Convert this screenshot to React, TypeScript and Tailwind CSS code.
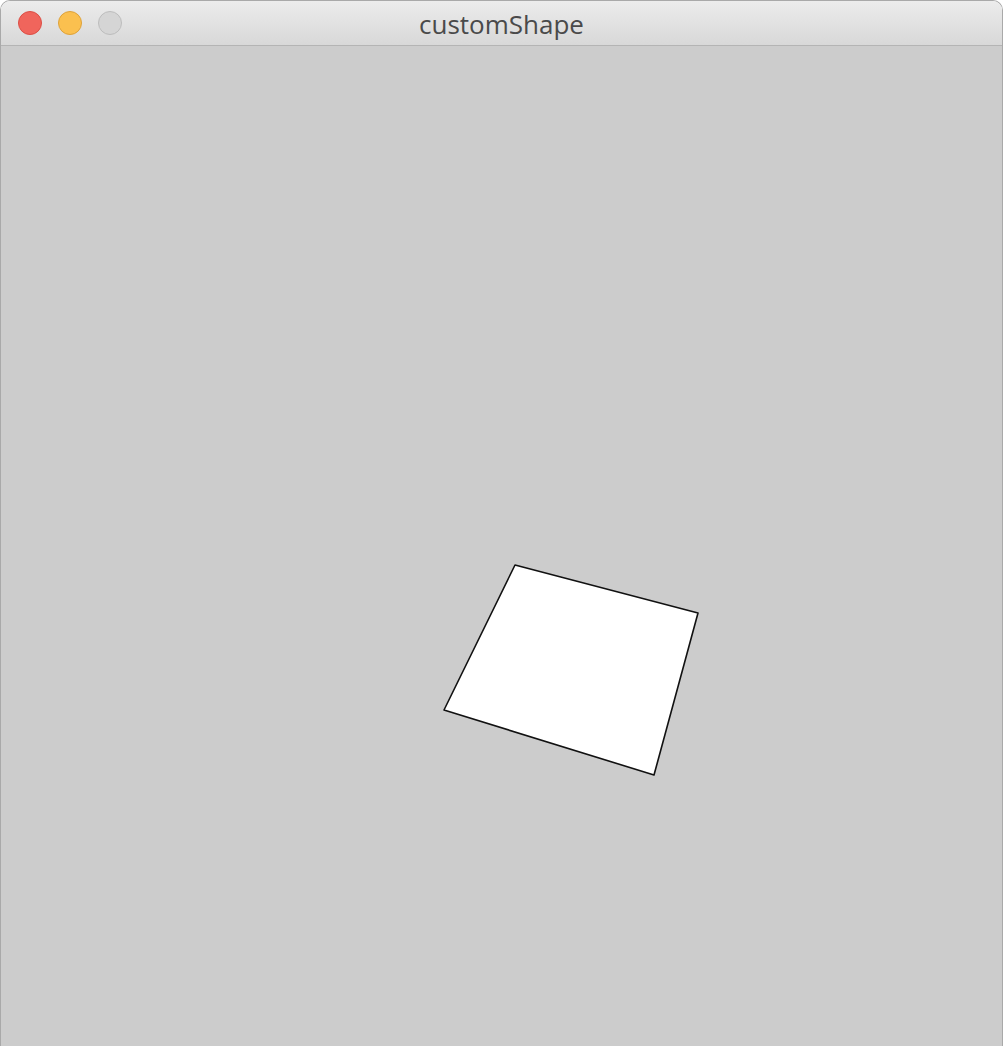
import React from "react";

export default function App() {
  return (
    <div className="w-[1004px] h-[1046px] bg-white overflow-hidden">
      <div className="w-[1003px] h-[1046px] rounded-t-[10px] border-x border-t border-[#a9a9a9] flex flex-col overflow-hidden">
        <div className="h-[45px] shrink-0 bg-gradient-to-b from-[#ececec] to-[#d8d8d8] border-b border-[#b4b4b4] flex items-center relative">
          <div className="flex items-center gap-[16px] pl-[17px]">
            <div className="w-[24px] h-[24px] rounded-full bg-[#f0655c] border border-[#dc4e45]" />
            <div className="w-[24px] h-[24px] rounded-full bg-[#fbc04f] border border-[#dea23a]" />
            <div className="w-[24px] h-[24px] rounded-full bg-[#d5d5d5] border border-[#bdbdbd]" />
          </div>
          <div
            className="absolute inset-x-0 top-[1px] h-[45px] flex items-center justify-center text-[26px] text-[#4a4a4a] pointer-events-none"
            style={{ fontFamily: '"Open Sans", "Liberation Sans", sans-serif' }}
          >
            customShape
          </div>
        </div>
        <div className="flex-1 bg-[#cccccc] relative">
          <svg className="absolute left-0 top-0" width="1004" height="1001" viewBox="0 45 1004 1001">
            <polygon
              points="514,564 697,612 653,774 443,709"
              fill="#ffffff"
              stroke="#111111"
              strokeWidth="1.6"
              strokeLinejoin="round"
            />
          </svg>
        </div>
      </div>
    </div>
  );
}
